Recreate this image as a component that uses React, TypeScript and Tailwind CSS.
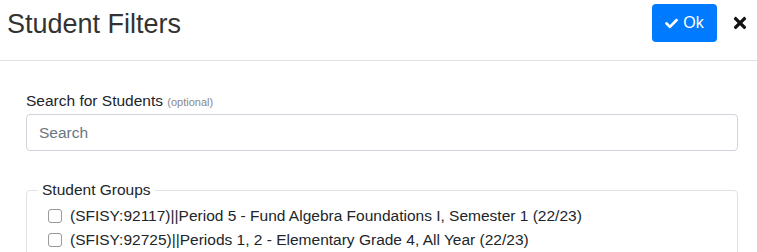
import React, { useState } from "react";

const GROUPS = [
  "(SFISY:92117)||Period 5 - Fund Algebra Foundations I, Semester 1 (22/23)",
  "(SFISY:92725)||Periods 1, 2 - Elementary Grade 4, All Year (22/23)",
];

export default function App() {
  const [query, setQuery] = useState("");
  const [checked, setChecked] = useState<boolean[]>(GROUPS.map(() => false));

  return (
    <div
      className="w-[757px] h-[252px] overflow-hidden bg-white text-[#212529]"
      style={{ fontFamily: '"Liberation Sans", Arial, sans-serif' }}
    >
      {/* Header */}
      <div className="h-[61px] border-b border-[#dee2e6] flex items-start justify-between pl-[7px] pr-[10px]">
        <h1 className="mt-[6px] text-[27px] leading-[36px] font-light text-[#333]">
          Student Filters
        </h1>
        <div className="flex items-center mt-[4px] gap-[16px]">
          <button
            type="button"
            className="h-[38px] w-[65px] rounded-[4px] bg-[#007bff] text-white flex items-center justify-center gap-[5px] text-[16px]"
          >
            <svg viewBox="0 0 512 512" className="w-[13px] h-[13px]" fill="currentColor">
              <path d="M173.9 439.4l-166.4-166.4c-10-10-10-26.2 0-36.2l36.2-36.2c10-10 26.2-10 36.2 0L192 312.7 432.1 72.6c10-10 26.2-10 36.2 0l36.2 36.2c10 10 10 26.2 0 36.2L210.1 439.4c-10 10-26.2 10-36.2 0z" />
            </svg>
            <span>Ok</span>
          </button>
          <button type="button" className="w-[14px] h-[14px] flex items-center justify-center text-[#111]">
            <svg viewBox="0 0 352 512" className="w-[14px] h-[18px]" fill="currentColor">
              <path d="M242.7 256l100.1-100.1c12.3-12.3 12.3-32.2 0-44.5l-22.2-22.2c-12.3-12.3-32.2-12.3-44.5 0L176 189.3 75.9 89.2c-12.3-12.3-32.2-12.3-44.5 0L9.2 111.4c-12.3 12.3-12.3 32.2 0 44.5L109.3 256 9.2 356.1c-12.3 12.3-12.3 32.2 0 44.5l22.2 22.2c12.3 12.3 32.2 12.3 44.5 0L176 322.7l100.1 100.1c12.3 12.3 32.2 12.3 44.5 0l22.2-22.2c12.3-12.3 12.3-32.2 0-44.5L242.7 256z" />
            </svg>
          </button>
        </div>
      </div>

      {/* Body */}
      <div className="pl-[26px] pr-[19px] pt-[30px]">
        <label className="block text-[15.5px] leading-[20px] mb-[2px]">
          Search for Students <span className="text-[11px] text-[#888]">(optional)</span>
        </label>
        <input
          type="text"
          value={query}
          onChange={(e) => setQuery(e.target.value)}
          placeholder="Search"
          className="w-full h-[37px] border border-[#ced4da] rounded-[4px] px-[12px] text-[15.5px] text-[#495057] placeholder-[#6c757d] outline-none"
        />

        <fieldset className="mt-[30px] border border-[#e2e2e2] rounded-[4px] pl-[21px] pr-[12px] pb-[8px]">
          <legend className="px-[4px] -ml-[10px] text-[15.5px] leading-[18px]">Student Groups</legend>
          <div className="flex flex-col gap-[6px] mt-[8px]">
            {GROUPS.map((g, i) => (
              <label key={i} className="flex items-center gap-[8px] text-[15.5px] leading-[18px]">
                <input
                  type="checkbox"
                  checked={checked[i]}
                  onChange={() =>
                    setChecked((prev) => prev.map((c, j) => (j === i ? !c : c)))
                  }
                  className="appearance-none w-[14px] h-[14px] border border-[#999] rounded-[3px] bg-white shrink-0"
                />
                <span>{g}</span>
              </label>
            ))}
          </div>
        </fieldset>
      </div>
    </div>
  );
}
